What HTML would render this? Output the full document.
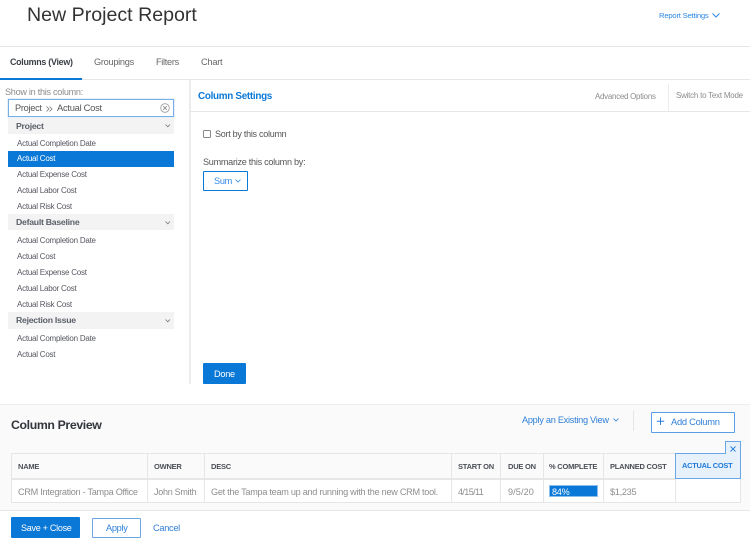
<!DOCTYPE html>
<html><head><meta charset="utf-8"><style>
html,body{margin:0;padding:0;background:#fff}
body{width:750px;height:543px;position:relative;overflow:hidden;font-family:"Liberation Sans",sans-serif;color:#555}
#w{position:absolute;left:0;top:0;width:750px;height:543px;filter:blur(.25px)}
.t,.g{letter-spacing:-.03em}
.t{position:absolute;white-space:nowrap;line-height:14px}
.b{position:absolute}
.i{font-size:8px;color:#55585f;margin-top:.5px}
.g{font-size:8.7px;font-weight:bold;color:#5b5f69;background:#f3f3f3;position:absolute;left:8px;width:158px;padding-left:8px;line-height:16px}
.h{font-size:7.5px;font-weight:bold;color:#4c4f57}
.c{font-size:9.15px;color:#8e8e8e}
.l{position:absolute;background:#e6e6e6}
svg{position:absolute;overflow:visible}
</style></head><body><div id="w">
<div class="t" style="left:27px;top:3px;font-size:19.6px;line-height:24px;color:#333;letter-spacing:0">New Project Report</div>
<div class="t" style="left:659px;top:9px;font-size:7.7px;color:#2f8ae4">Report Settings</div>
<svg style="left:711.500px;top:13px" width="8" height="5"><path d="M0.500 0.500L4 4L7.500 0.500" fill="none" stroke="#2f8ae4" stroke-width="1"/></svg>
<div class="l" style="left:0;top:46px;width:750px;height:1px"></div>
<div class="l" style="left:0;top:79px;width:750px;height:1px"></div>
<div class="b" style="left:0;top:78px;width:82px;height:2px;background:#0a78d7"></div>
<div class="t" style="left:10px;top:55px;font-size:8.9px;font-weight:bold;color:#3c3f47">Columns (View)</div>
<div class="t" style="left:94px;top:55px;font-size:9.2px;color:#666">Groupings</div>
<div class="t" style="left:156px;top:55px;font-size:9.1px;color:#666">Filters</div>
<div class="t" style="left:201px;top:55px;font-size:9.3px;color:#666">Chart</div>

<div class="t" style="left:5px;top:85px;font-size:9.1px;color:#8b8b8b">Show in this column:</div>
<div class="b" style="left:8px;top:99px;width:164px;height:16px;border:1px solid #76aee8;background:#fff;box-shadow:0 0 0 .5px #cfe2f7"></div>
<div class="t" style="left:15px;top:101px;font-size:9.200px;color:#555">Project</div>
<svg style="left:46px;top:105.500px" width="7" height="6"><path d="M.5.5L3 3L.5 5.500M3.500.5L6 3L3.500 5.500" fill="none" stroke="#777" stroke-width=".8"/></svg>
<div class="t" style="left:57px;top:101px;font-size:9.400px;color:#555">Actual Cost</div>
<svg style="left:160px;top:103px" width="10" height="10"><circle cx="5" cy="5" r="4.300" fill="none" stroke="#999" stroke-width=".8"/><path d="M3.200 3.200L6.800 6.800M6.800 3.200L3.200 6.800" stroke="#888" stroke-width=".8"/></svg>

<div class="g" style="top:118px;height:16px">Project</div>
<svg style="left:165px;top:124px" width="6" height="4"><path d="M.5.5L2.800 2.800L5 .5" fill="none" stroke="#777" stroke-width=".8"/></svg>
<div class="t i" style="left:17px;top:136px">Actual Completion Date</div>
<div class="b" style="left:8px;top:151px;width:166px;height:16px;background:#0a78d7"></div>
<div class="t i" style="left:17px;top:151px;color:#fff">Actual Cost</div>
<div class="t i" style="left:17px;top:167px">Actual Expense Cost</div>
<div class="t i" style="left:17px;top:183px">Actual Labor Cost</div>
<div class="t i" style="left:17px;top:199.500px">Actual Risk Cost</div>
<div class="g" style="top:214px;height:16px">Default Baseline</div>
<svg style="left:165px;top:221px" width="6" height="4"><path d="M.5.5L2.800 2.800L5 .5" fill="none" stroke="#777" stroke-width=".8"/></svg>
<div class="t i" style="left:17px;top:233px">Actual Completion Date</div>
<div class="t i" style="left:17px;top:249px">Actual Cost</div>
<div class="t i" style="left:17px;top:265px">Actual Expense Cost</div>
<div class="t i" style="left:17px;top:281px">Actual Labor Cost</div>
<div class="t i" style="left:17px;top:297px">Actual Risk Cost</div>
<div class="g" style="top:312px;height:17px;line-height:17px">Rejection Issue</div>
<svg style="left:165px;top:319px" width="6" height="4"><path d="M.5.5L2.800 2.800L5 .5" fill="none" stroke="#777" stroke-width=".8"/></svg>
<div class="t i" style="left:17px;top:331px">Actual Completion Date</div>
<div class="t i" style="left:17px;top:347px">Actual Cost</div>

<div class="l" style="left:189px;top:80px;width:1.500px;height:304px;background:#ececec"></div>
<div class="l" style="left:190px;top:111px;width:560px;height:1px"></div>
<div class="t" style="left:198px;top:90px;font-size:9.900px;font-weight:bold;color:#0a78d7">Column Settings</div>
<div class="t" style="left:595px;top:90px;font-size:7.900px;color:#8c8c8c">Advanced Options</div>
<div class="l" style="left:668px;top:84px;width:1px;height:27px;background:#ececec"></div>
<div class="t" style="left:676px;top:89px;font-size:8px;color:#8c8c8c">Switch to Text Mode</div>
<div class="b" style="left:203px;top:129.500px;width:6px;height:6px;border:1px solid #888;border-radius:1.500px;background:#fff"></div>
<div class="t" style="left:215px;top:127px;font-size:9px;color:#555">Sort by this column</div>
<div class="t" style="left:203px;top:155px;font-size:9.100px;color:#555">Summarize this column by:</div>
<div class="b" style="left:203px;top:171px;width:42.500px;height:17.500px;border:1.500px solid #0a78d7;border-radius:1px;background:#fff"></div>
<div class="t" style="left:214px;top:174px;font-size:9.200px;color:#2f8ae4">Sum</div>
<svg style="left:235px;top:179px" width="6" height="4"><path d="M.5.5L3 3L5.500.5" fill="none" stroke="#2f8ae4" stroke-width=".8"/></svg>
<div class="b" style="left:203px;top:363px;width:43px;height:21px;background:#0a78d7;border-radius:1px"></div>
<div class="t" style="left:214px;top:367px;font-size:9.200px;color:#fff">Done</div>

<div class="b" style="left:0;top:404px;width:750px;height:107px;background:#fafafa;border-top:1px solid #eee;border-bottom:1px solid #e6e6e6;box-sizing:border-box"></div>
<div class="t" style="left:11px;top:418px;font-size:12.300px;font-weight:bold;color:#33363c">Column Preview</div>
<div class="t" style="left:522px;top:413px;font-size:9.200px;color:#2f7fd8">Apply an Existing View</div>
<svg style="left:613px;top:418px" width="6" height="4"><path d="M.5.5L3 3L5.500.5" fill="none" stroke="#2f7fd8" stroke-width=".8"/></svg>
<div class="l" style="left:633px;top:410px;width:1px;height:21px"></div>
<div class="b" style="left:651px;top:412px;width:82px;height:19px;border:1px solid #5a9fe4;border-radius:1px;background:#fff"></div>
<svg style="left:656px;top:417px" width="9" height="9"><path d="M4.500 .5V8M.8 4.300H8.200" stroke="#2a7fd8" stroke-width="1"/></svg>
<div class="t" style="left:671px;top:415px;font-size:9.350px;color:#2f7fd8">Add Column</div>

<div class="b" style="left:11px;top:453px;width:666px;height:50px;background:#fff;border:1px solid #e6e6e6;box-sizing:border-box"></div>
<div class="b" style="left:12px;top:454px;width:664px;height:24px;background:#fafafa"></div>
<div class="l" style="left:11px;top:478px;width:666px;height:2px"></div>
<div class="l" style="left:147px;top:453px;width:1px;height:50px"></div>
<div class="l" style="left:204px;top:453px;width:1px;height:50px"></div>
<div class="l" style="left:451px;top:453px;width:1px;height:50px"></div>
<div class="l" style="left:500px;top:453px;width:1px;height:50px"></div>
<div class="l" style="left:542.500px;top:453px;width:1px;height:50px"></div>
<div class="l" style="left:603px;top:453px;width:1px;height:50px"></div>
<div class="t h" style="left:18px;top:460px">NAME</div>
<div class="t h" style="left:154px;top:460px">OWNER</div>
<div class="t h" style="left:211px;top:460px">DESC</div>
<div class="t h" style="left:458px;top:460px">START ON</div>
<div class="t h" style="left:508px;top:460px">DUE ON</div>
<div class="t h" style="left:549px;top:460px">% COMPLETE</div>
<div class="t h" style="left:610px;top:460px">PLANNED COST</div>
<div class="t c" style="left:18px;top:484.500px">CRM Integration - Tampa Office</div>
<div class="t c" style="left:154px;top:484.500px;font-size:9px">John Smith</div>
<div class="t c" style="left:211px;top:484.500px">Get the Tampa team up and running with the new CRM tool.</div>
<div class="t c" style="left:458px;top:484.500px;font-size:9px;letter-spacing:-.6px">4/15/11</div>
<div class="t c" style="left:508px;top:484.500px;font-size:9.150px;letter-spacing:.1px">9/5/20</div>
<div class="b" style="left:549px;top:485px;width:48.500px;height:12px;background:#0a78d7;border:.5px solid #8dbdea;box-sizing:border-box"></div>
<div class="t c" style="left:552px;top:484.500px;color:#fff;font-size:9.100px">84%</div>
<div class="t c" style="left:610px;top:484.500px">$1,235</div>
<div class="b" style="left:675px;top:453px;width:66px;height:50px;background:#fff;border:1px solid #e6e6e6;box-sizing:border-box"></div>
<div class="b" style="left:725px;top:441px;width:16px;height:13px;background:#e6f1fc;border:1px solid #6aa6e6;border-bottom:0;box-sizing:border-box"></div>
<div class="b" style="left:675px;top:453px;width:66px;height:26px;background:#e6f1fc;border:1px solid #6aa6e6;box-sizing:border-box"></div>
<div class="b" style="left:726px;top:453px;width:14px;height:1px;background:#e6f1fc"></div>
<svg style="left:730px;top:446px" width="6" height="6"><path d="M.5.5L5.500 5.500M5.500.5L.5 5.500" stroke="#2a7fd8" stroke-width=".9"/></svg>
<div class="t h" style="left:682px;top:458.500px;color:#1f7ad8;font-size:7.400px">ACTUAL COST</div>

<div class="b" style="left:11px;top:517px;width:69px;height:20.500px;background:#0a78d7;border-radius:1px"></div>
<div class="t" style="left:21px;top:521px;font-size:9px;color:#fff">Save + Close</div>
<div class="b" style="left:92px;top:517.500px;width:46.500px;height:18px;border:1px solid #6aa6e6;border-radius:1px;background:#fff"></div>
<div class="t" style="left:106px;top:521px;font-size:9.200px;color:#2f7fd8">Apply</div>
<div class="t" style="left:153px;top:521px;font-size:9.200px;color:#2f7fd8">Cancel</div>
</div></body></html>
